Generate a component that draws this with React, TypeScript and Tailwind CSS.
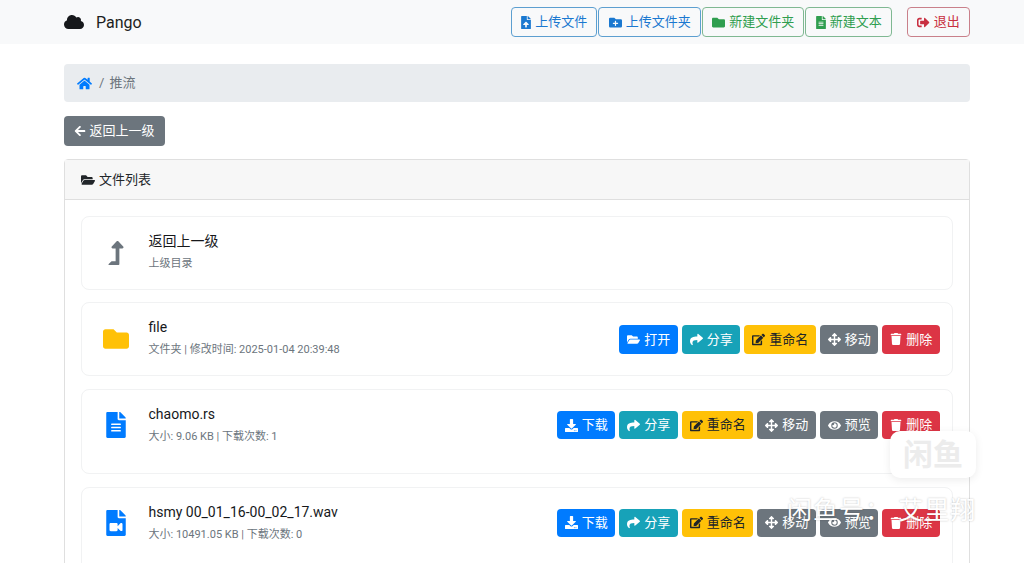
import type { ReactNode } from 'react'
import {
  FaArrowLeft,
  FaArrowsAlt,
  FaCloud,
  FaDownload,
  FaEdit,
  FaEye,
  FaFileAlt,
  FaFileUpload,
  FaFileVideo,
  FaFolder,
  FaFolderOpen,
  FaFolderPlus,
  FaHome,
  FaLevelUpAlt,
  FaShare,
  FaSignOutAlt,
  FaTrash,
} from 'react-icons/fa'

const blue = 'bg-[#007bff] text-white'
const teal = 'bg-[#17a2b8] text-white'
const yellow = 'bg-[#ffc107] text-[#212529]'
const gray = 'bg-[#6c757d] text-white'
const red = 'bg-[#dc3545] text-white'

function Btn({ color, icon, label }: { color: string; icon: ReactNode; label: string }) {
  return (
    <button className={`flex h-[28.5px] items-center gap-[4px] rounded-[4px] px-[7.75px] text-[13px] ${color}`}>
      {icon}
      {label}
    </button>
  )
}

function TopBtn({ color, icon, label }: { color: string; icon: ReactNode; label: string }) {
  return (
    <button className={`flex h-[30px] items-center justify-center gap-[4px] whitespace-nowrap rounded-[4px] border px-[9.25px] text-[13px] ${color}`}>
      {icon}
      {label}
    </button>
  )
}

function Actions({ preview, open }: { preview?: boolean; open?: boolean }) {
  return (
    <div className="flex gap-[4px]">
      {open ? (
        <Btn color={blue} icon={<FaFolderOpen size={13} />} label="打开" />
      ) : (
        <Btn color={blue} icon={<FaDownload size={13} />} label="下载" />
      )}
      <Btn color={teal} icon={<FaShare size={13} />} label="分享" />
      <Btn color={yellow} icon={<FaEdit size={13} />} label="重命名" />
      <Btn color={gray} icon={<FaArrowsAlt size={13} />} label="移动" />
      {preview && <Btn color={gray} icon={<FaEye size={13} />} label="预览" />}
      <Btn color={red} icon={<FaTrash size={12} />} label="删除" />
    </div>
  )
}

function Row({
  icon,
  name,
  meta,
  height,
  alignTop,
  actions,
}: {
  icon: ReactNode
  name: string
  meta: string
  height: string
  alignTop?: boolean
  actions?: ReactNode
}) {
  return (
    <div className={`flex shrink-0 rounded-[8px] border border-[#f1f2f3] pl-[16px] pr-[12px] ${height}`}>
      <div className={`flex w-[35px] shrink-0 justify-center ${alignTop ? 'pt-[22px]' : 'items-center'}`}>{icon}</div>
      <div className="ml-[15.5px] min-w-0 flex-1 pt-[13px]">
        <div className="text-[14px] leading-[22px] text-[#16181b]">{name}</div>
        <div className="mt-[3px] text-[11px] leading-[18px] text-[#6c757d]">{meta}</div>
      </div>
      <div className={`flex shrink-0 ${alignTop ? 'pt-[21px]' : 'items-center'}`}>{actions}</div>
    </div>
  )
}

export default function App() {
  return (
    <div
      className="relative h-[563px] overflow-hidden bg-white text-[#212529]"
      style={{ fontFamily: 'Roboto, "Noto Sans CJK SC", sans-serif' }}
    >
      <nav className="flex h-[44px] items-center bg-[#f8f9fa] pl-[64px] pr-[54px]">
        <FaCloud size={20} className="text-[#16181b]" />
        <span className="ml-[12px] mt-px text-[16px] text-[#1c1e21]">Pango</span>
        <div className="ml-auto flex">
          <TopBtn color="border-[#5c9fd0] text-[#1a78d0]" icon={<FaFileUpload size={13} className="w-[10px]" />} label="上传文件" />
          <TopBtn color="ml-px border-[#5c9fd0] text-[#1a78d0]" icon={<FaFolderPlus size={13} />} label="上传文件夹" />
          <TopBtn color="ml-px border-[#7fb892] text-[#2f9e4f]" icon={<FaFolder size={13} />} label="新建文件夹" />
          <TopBtn color="ml-px border-[#7fb892] text-[#2f9e4f]" icon={<FaFileAlt size={13} className="w-[10px]" />} label="新建文本" />
          <TopBtn color="ml-[15px] w-[63px] border-[#c9808a] text-[#c82f40]" icon={<FaSignOutAlt size={13} />} label="退出" />
        </div>
      </nav>

      <main className="flex flex-col pl-[64px] pr-[54px]">
        <div className="mt-[20px] flex h-[38px] items-center rounded-[4px] bg-[#e9ecef] px-[13px] text-[13px] text-[#6c757d]">
          <FaHome size={15} className="text-[#007bff]" />
          <span className="ml-[7px] mr-[5px]">/</span>
          <span>推流</span>
        </div>

        <button className="mt-[14px] flex h-[30px] w-[101px] items-center justify-center gap-[3px] rounded-[4px] bg-[#6c757d] text-[13px] text-white">
          <FaArrowLeft size={12} />
          返回上一级
        </button>

        <section className="mt-[13px] flex flex-col rounded-t-[4px] border border-[#dfdfdf]">
          <div className="flex h-[40px] items-center gap-[4px] border-b border-[#dfdfdf] bg-[#f7f7f7] pl-[16px] text-[13px] text-[#212529]">
            <FaFolderOpen size={14} />
            文件列表
          </div>
          <div className="flex flex-col gap-[12.4px] px-[16px] pb-[24px] pt-[16px]">
            <Row
              height="h-[74px]"
              icon={<FaLevelUpAlt size={24} className="text-[#6c757d]" />}
              name="返回上一级"
              meta="上级目录"
            />
            <Row
              height="h-[74px]"
              icon={<FaFolder size={26} className="text-[#ffc107]" />}
              name="file"
              meta="文件夹 | 修改时间: 2025-01-04 20:39:48"
              actions={<Actions open />}
            />
            <Row
              height="h-[85.5px]"
              alignTop
              icon={<FaFileAlt size={26} className="text-[#007bff]" />}
              name="chaomo.rs"
              meta="大小: 9.06 KB | 下载次数: 1"
              actions={<Actions preview />}
            />
            <Row
              height="h-[85.5px]"
              icon={<FaFileVideo size={26} className="text-[#007bff]" />}
              alignTop
              name="hsmy 00_01_16-00_02_17.wav"
              meta="大小: 10491.05 KB | 下载次数: 0"
              actions={<Actions preview />}
            />
          </div>
        </section>
      </main>

      {/* watermark */}
      <div className="absolute left-[890px] top-[431px] flex h-[47px] w-[86px] items-center justify-center rounded-[10px] bg-white text-[30px] font-bold leading-none text-[#ececec] shadow-[0_2px_8px_rgba(0,0,0,0.08)]">
        闲鱼
      </div>
      <div className="absolute left-[787px] top-[494px] whitespace-nowrap text-[25px] leading-[34px] tracking-[1px] text-white [text-shadow:0_0_2px_rgba(0,0,0,0.25)]">
        闲鱼号： 艾里翔
      </div>
    </div>
  )
}
